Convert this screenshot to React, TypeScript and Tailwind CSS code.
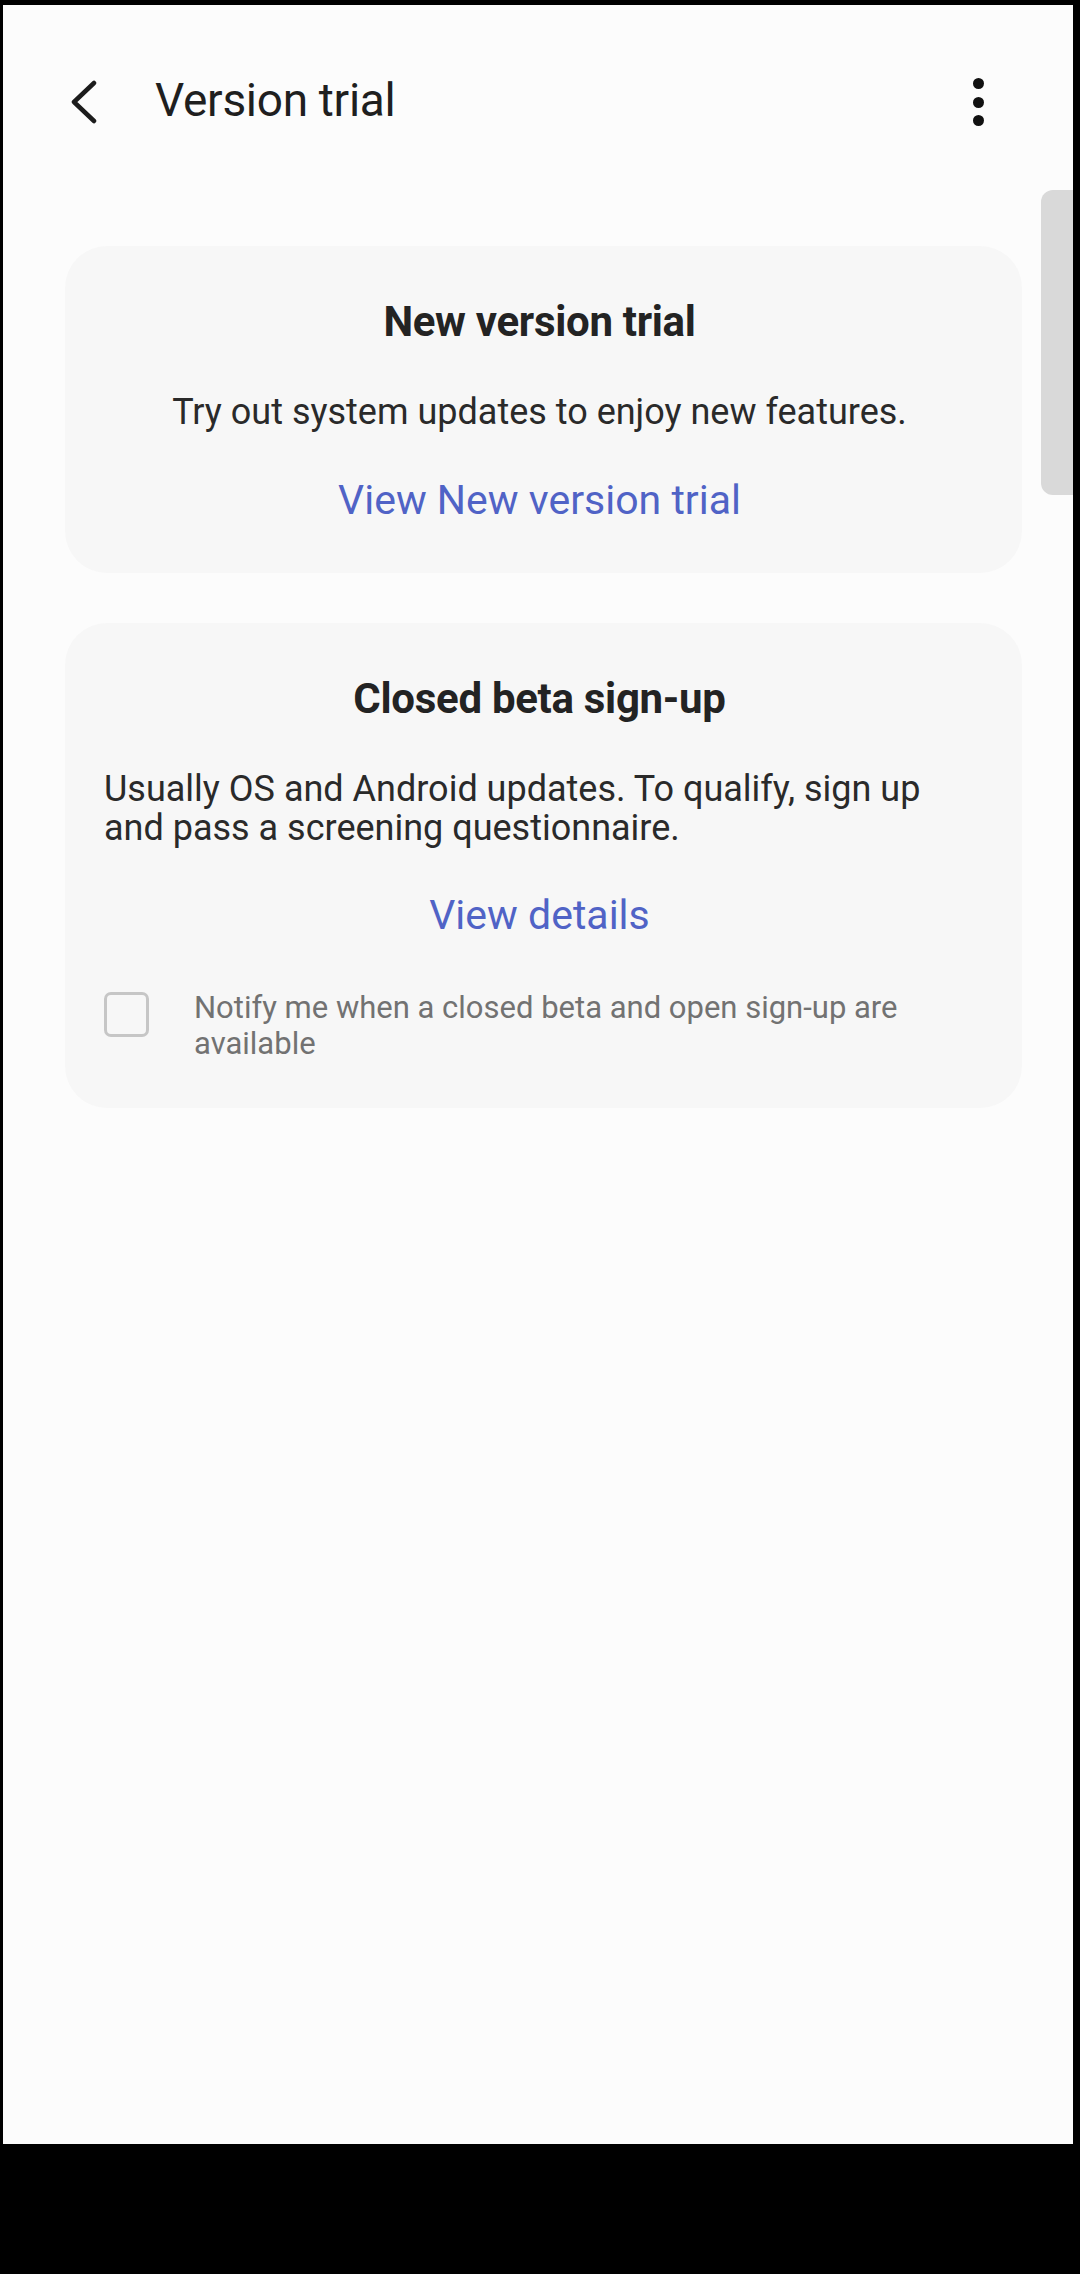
import React from "react";

export default function App() {
  return (
    <div className="w-[1080px] h-[2274px] bg-black overflow-hidden font-[Roboto,sans-serif]">
      <div className="relative ml-[3px] mt-[5px] w-[1070px] h-[2139px] bg-[#fcfcfc]">
        {/* Header */}
        <div className="flex h-[190px] items-center pl-[66px] pr-[89px]">
          <svg width="30" height="44" viewBox="0 0 30 44" className="shrink-0 mt-[4px]">
            <path d="M25 3 L5 22 L25 41" fill="none" stroke="#1c1c1c" strokeWidth="4.5" strokeLinecap="round" strokeLinejoin="round" />
          </svg>
          <div className="ml-[56px] text-[46px] leading-none text-[#1f1f1f] tracking-[-0.3px]">Version trial</div>
          <div className="ml-auto mt-[4px] flex flex-col gap-[7.5px]">
            <span className="block w-[11px] h-[11px] rounded-full bg-[#111]" />
            <span className="block w-[11px] h-[11px] rounded-full bg-[#111]" />
            <span className="block w-[11px] h-[11px] rounded-full bg-[#111]" />
          </div>
        </div>

        {/* Scrollbar */}
        <div className="absolute right-0 top-[185px] w-[32px] h-[305px] bg-[#d9d9d9] rounded-l-[12px]" />

        {/* Cards */}
        <div className="mt-[51px] ml-[62px] w-[957px] flex flex-col gap-[50px]">
          <div className="rounded-[42px] bg-[#f7f7f7] pt-[51px] pb-[48px] pl-[39px] pr-[47px] flex flex-col items-center text-center">
            <div className="text-[42px] leading-[50px] font-bold text-[#232323] tracking-[-0.3px]">New version trial</div>
            <div className="mt-[41px] text-[36px] leading-[48px] text-[#2a2a2a]">Try out system updates to enjoy new features.</div>
            <div className="mt-[39px] text-[41px] leading-[50px] text-[#5063c6]">View New version trial</div>
          </div>

          <div className="rounded-[42px] bg-[#f7f7f7] pt-[51px] pb-[46px] pl-[39px] pr-[47px] flex flex-col">
            <div className="text-center text-[42px] leading-[50px] font-bold text-[#232323] tracking-[-0.3px]">Closed beta sign-up</div>
            <div className="mt-[46px] text-[36px] leading-[39px] text-[#2a2a2a] max-w-[860px]">
              Usually OS and Android updates. To qualify, sign up and pass a screening questionnaire.
            </div>
            <div className="mt-[42px] text-center text-[41px] leading-[50px] text-[#5063c6]">View details</div>
            <div className="mt-[50px] flex items-start">
              <div className="mt-[2px] shrink-0 w-[45px] h-[45px] rounded-[7px] border-[3px] border-[#c6c6c6]" />
              <div className="ml-[45px] text-[31px] leading-[36px] text-[#727272] max-w-[760px]">
                Notify me when a closed beta and open sign-up are available
              </div>
            </div>
          </div>
        </div>
      </div>
    </div>
  );
}
